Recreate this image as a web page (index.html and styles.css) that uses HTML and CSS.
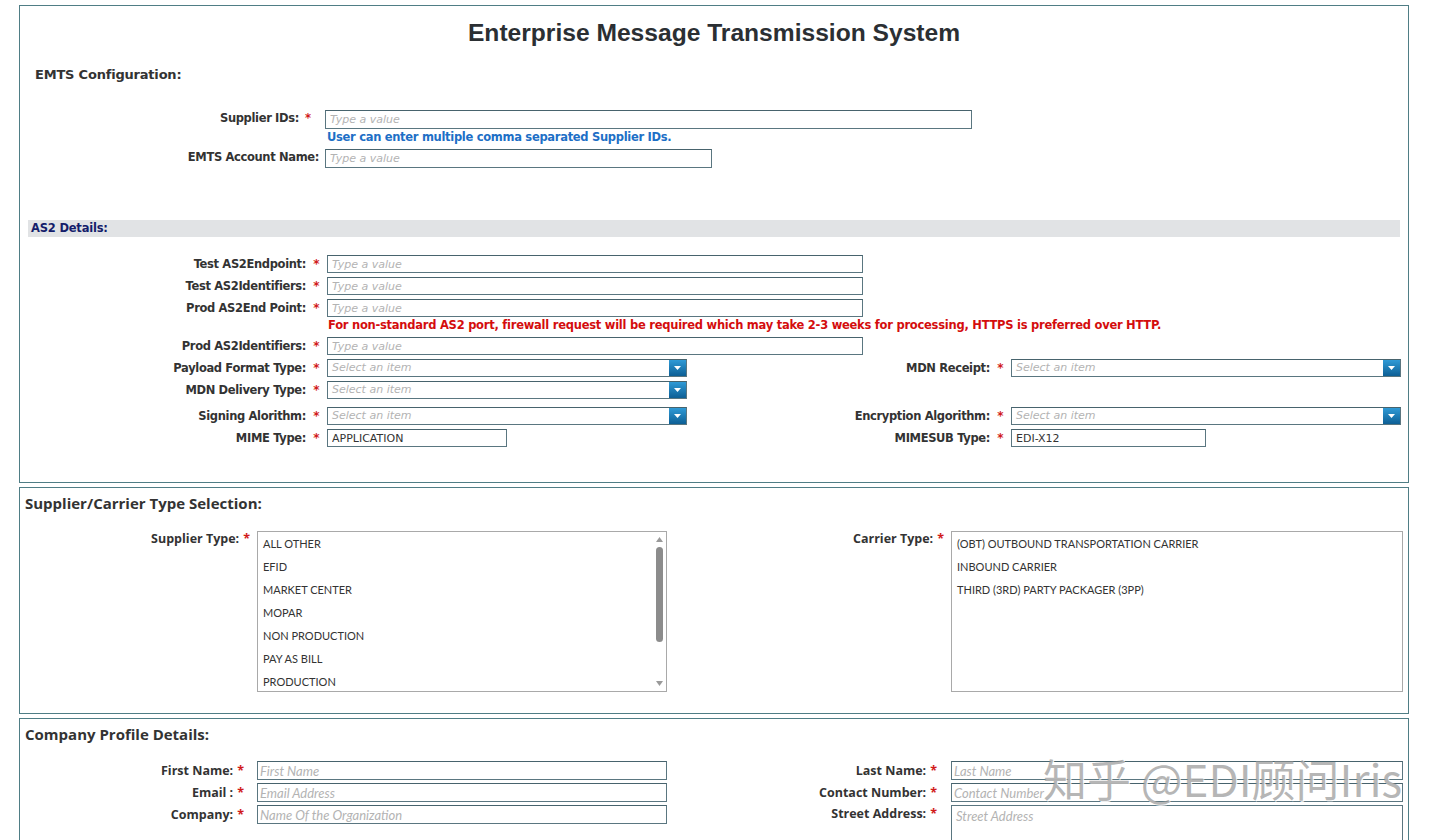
FILE: index.html
```html
<!DOCTYPE html>
<html>
<head>
<meta charset="utf-8">
<title>EMTS</title>
<link rel="stylesheet" href="styles.css">
</head>
<body>
<div class="page">
  <section class="box box-main">
    <h1 class="title">Enterprise Message Transmission System</h1>
    <h2 class="cfg-head">EMTS Configuration:</h2>
    <div class="cfg">
      <div class="row row-19">
        <label class="lbl lbl-cfg lbl-cfg-star">Supplier IDs:<span class="star">*</span></label>
        <input class="txt" style="width:647px" placeholder="Type a value">
      </div>
      <div class="hint hint-blue">User can enter multiple comma separated Supplier IDs.</div>
      <div class="row row-19 row-acct">
        <label class="lbl lbl-cfg">EMTS Account Name:</label>
        <input class="txt" style="width:387px" placeholder="Type a value">
      </div>
    </div>

    <div class="bar">AS2 Details:</div>

    <div class="as2">
      <div class="row">
        <div class="grp grp-left">
          <label class="lbl lbl-as2">Test AS2Endpoint:</label><span class="star-cell">*</span>
          <input class="txt" style="width:536px" placeholder="Type a value">
        </div>
      </div>
      <div class="row">
        <div class="grp grp-left">
          <label class="lbl lbl-as2">Test AS2Identifiers:</label><span class="star-cell">*</span>
          <input class="txt" style="width:536px" placeholder="Type a value">
        </div>
      </div>
      <div class="row">
        <div class="grp grp-left">
          <label class="lbl lbl-as2">Prod AS2End Point:</label><span class="star-cell">*</span>
          <input class="txt" style="width:536px" placeholder="Type a value">
        </div>
      </div>
      <div class="hint hint-red">For non-standard AS2 port, firewall request will be required which may take 2-3 weeks for processing, HTTPS is preferred over HTTP.</div>
      <div class="row row-after-hint">
        <div class="grp grp-left">
          <label class="lbl lbl-as2">Prod AS2Identifiers:</label><span class="star-cell">*</span>
          <input class="txt" style="width:536px" placeholder="Type a value">
        </div>
      </div>
      <div class="row">
        <div class="grp grp-left">
          <label class="lbl lbl-as2">Payload Format Type:</label><span class="star-cell">*</span>
          <div class="select" style="width:360px"><span class="ph">Select an item</span><span class="sel-btn"><svg width="7" height="4" viewBox="0 0 7 4"><path d="M0 0h7L3.5 4z" fill="#fff"/></svg></span></div>
        </div>
        <div class="grp grp-right">
          <label class="lbl lbl-as2r">MDN Receipt:</label><span class="star-cell">*</span>
          <div class="select" style="width:390px"><span class="ph">Select an item</span><span class="sel-btn"><svg width="7" height="4" viewBox="0 0 7 4"><path d="M0 0h7L3.5 4z" fill="#fff"/></svg></span></div>
        </div>
      </div>
      <div class="row">
        <div class="grp grp-left">
          <label class="lbl lbl-as2">MDN Delivery Type:</label><span class="star-cell">*</span>
          <div class="select" style="width:360px"><span class="ph">Select an item</span><span class="sel-btn"><svg width="7" height="4" viewBox="0 0 7 4"><path d="M0 0h7L3.5 4z" fill="#fff"/></svg></span></div>
        </div>
      </div>
      <div class="row row-gap8">
        <div class="grp grp-left">
          <label class="lbl lbl-as2">Signing Alorithm:</label><span class="star-cell">*</span>
          <div class="select" style="width:360px"><span class="ph">Select an item</span><span class="sel-btn"><svg width="7" height="4" viewBox="0 0 7 4"><path d="M0 0h7L3.5 4z" fill="#fff"/></svg></span></div>
        </div>
        <div class="grp grp-right">
          <label class="lbl lbl-as2r">Encryption Algorithm:</label><span class="star-cell">*</span>
          <div class="select" style="width:390px"><span class="ph">Select an item</span><span class="sel-btn"><svg width="7" height="4" viewBox="0 0 7 4"><path d="M0 0h7L3.5 4z" fill="#fff"/></svg></span></div>
        </div>
      </div>
      <div class="row">
        <div class="grp grp-left">
          <label class="lbl lbl-as2">MIME Type:</label><span class="star-cell">*</span>
          <input class="txt txt-val" style="width:180px" value="APPLICATION">
        </div>
        <div class="grp grp-right">
          <label class="lbl lbl-as2r">MIMESUB Type:</label><span class="star-cell">*</span>
          <input class="txt txt-val" style="width:195px" value="EDI-X12">
        </div>
      </div>
    </div>
  </section>

  <section class="box box-sel">
    <h2 class="sec-head">Supplier/Carrier Type Selection:</h2>
    <div class="sel-row">
      <div class="sgrp sgrp-left">
        <label class="slbl slbl-list">Supplier Type:<span class="star">*</span></label>
        <div class="listbox" style="width:410px">
          <ul class="items">
            <li>ALL OTHER</li>
            <li>EFID</li>
            <li>MARKET CENTER</li>
            <li>MOPAR</li>
            <li>NON PRODUCTION</li>
            <li>PAY AS BILL</li>
            <li>PRODUCTION</li>
          </ul>
          <div class="scrollbar">
            <svg class="sb-arrow" width="7" height="5" viewBox="0 0 7 5"><path d="M0 5L3.5 0L7 5z" fill="#9a9a9a"/></svg>
            <div class="sb-thumb"></div>
            <div class="sb-space"></div>
            <svg class="sb-arrow" width="7" height="5" viewBox="0 0 7 5"><path d="M0 0h7L3.5 5z" fill="#9a9a9a"/></svg>
          </div>
        </div>
      </div>
      <div class="sgrp sgrp-right">
        <label class="slbl slbl-list">Carrier Type:<span class="star">*</span></label>
        <div class="listbox" style="width:452px">
          <ul class="items">
            <li>(OBT) OUTBOUND TRANSPORTATION CARRIER</li>
            <li>INBOUND CARRIER</li>
            <li>THIRD (3RD) PARTY PACKAGER (3PP)</li>
          </ul>
        </div>
      </div>
    </div>
  </section>

  <section class="box box-profile">
    <h2 class="sec-head">Company Profile Details:</h2>
    <div class="prof-rows">
      <div class="prow">
        <div class="sgrp sgrp-left">
          <label class="slbl">First Name:<span class="star">*</span></label>
          <input class="txt txt-b" style="width:410px" placeholder="First Name">
        </div>
        <div class="sgrp sgrp-right">
          <label class="slbl">Last Name:<span class="star">*</span></label>
          <input class="txt txt-b" style="width:452px" placeholder="Last Name">
        </div>
      </div>
      <div class="prow">
        <div class="sgrp sgrp-left">
          <label class="slbl">Email :<span class="star">*</span></label>
          <input class="txt txt-b" style="width:410px" placeholder="Email Address">
        </div>
        <div class="sgrp sgrp-right">
          <label class="slbl">Contact Number:<span class="star">*</span></label>
          <input class="txt txt-b" style="width:452px" placeholder="Contact Number">
        </div>
      </div>
      <div class="prow">
        <div class="sgrp sgrp-left">
          <label class="slbl">Company:<span class="star">*</span></label>
          <input class="txt txt-b" style="width:410px" placeholder="Name Of the Organization">
        </div>
        <div class="sgrp sgrp-right sgrp-top">
          <label class="slbl">Street Address:<span class="star">*</span></label>
          <textarea class="area" style="width:452px" placeholder="Street Address"></textarea>
        </div>
      </div>
    </div>
  </section>
</div>
<div class="watermark">知乎 @EDI顾问Iris</div>
</body>
</html>
```

FILE: styles.css
```css
html, body {
  margin: 0;
  padding: 0;
  background: #ffffff;
  overflow: hidden;
}
body {
  font-family: "DejaVu Sans", Verdana, sans-serif;
  color: #333333;
  width: 1440px;
  height: 840px;
  position: relative;
}
.page {
  padding: 5px 0 0 19px;
  width: 1390px;
}
.box {
  border: 1px solid #4f7d85;
  box-sizing: border-box;
  width: 1390px;
  background: #fff;
}
.box + .box {
  margin-top: 4px;
}
.box-main {
  padding: 13px 0 35px 0;
}
.title {
  margin: 0;
  font-family: "Liberation Sans", Arial, sans-serif;
  font-weight: bold;
  font-size: 24.6px;
  line-height: 28px;
  text-align: center;
  color: #2b2f33;
}
.cfg-head {
  margin: 19px 0 0 15px;
  font-size: 13px;
  line-height: 18px;
  font-weight: bold;
  color: #333;
  letter-spacing: -0.2px;
}
.cfg {
  margin-top: 26px;
}
.row {
  display: flex;
  align-items: center;
  height: 18px;
  margin-top: 4px;
}
.row-19 {
  height: 19px;
  margin-top: 0;
}
.row-acct {
  margin-top: 5px;
}
.lbl {
  font-weight: bold;
  font-size: 11.5px;
  letter-spacing: -0.35px;
  text-align: right;
  white-space: nowrap;
  box-sizing: border-box;
  color: #333;
  flex: none;
}
.lbl-cfg {
  width: 305px;
  padding-right: 6px;
  padding-bottom: 3px;
}
.lbl-cfg-star {
  padding-right: 14px;
}
.star {
  color: #d11a1a;
  margin-left: 6px;
  letter-spacing: 0;
}
.star-cell {
  width: 21px;
  text-align: center;
  color: #d11a1a;
  font-weight: bold;
  font-size: 12px;
  flex: none;
}
.txt {
  box-sizing: border-box;
  height: 18px;
  border: 1px solid #5a7680;
  border-top-color: #47636d;
  padding: 0 4px;
  margin: 0;
  font-family: "DejaVu Sans", Verdana, sans-serif;
  font-size: 11px;
  color: #333;
  background: #fff;
  outline: none;
  flex: none;
}
.row-19 .txt {
  height: 19px;
}
.txt::placeholder {
  color: #b3b3b3;
  font-style: italic;
}
.txt-val {
  font-size: 11px;
  color: #333;
}
.hint {
  font-weight: bold;
  font-size: 11.5px;
  letter-spacing: -0.3px;
  line-height: 14px;
  height: 14px;
  white-space: nowrap;
}
.hint-blue {
  color: #1d6fc6;
  padding-left: 307px;
  padding-top: 1px;
}
.hint-red {
  color: #d40d0d;
  padding-left: 308px;
  margin-top: 1px;
  letter-spacing: -0.25px;
}
.row-after-hint {
  margin-top: 5px;
}
.row-gap8 {
  margin-top: 8px;
}
.bar {
  margin: 52px 8px 0 8px;
  height: 17px;
  line-height: 17px;
  background: #e1e3e5;
  padding-left: 3px;
  font-weight: bold;
  font-size: 11.5px;
  letter-spacing: -0.2px;
  color: #141d6b;
}
.as2 {
  padding-top: 14px;
}
.grp {
  display: flex;
  align-items: center;
  height: 100%;
}
.grp-left {
  width: 680px;
  flex: none;
}
.lbl-as2 {
  width: 286px;
}
.lbl-as2r {
  width: 290px;
}
.select {
  box-sizing: border-box;
  height: 18px;
  border: 1px solid #5a7680;
  border-top-color: #47636d;
  display: flex;
  align-items: stretch;
  flex: none;
}
.select .ph {
  flex: 1;
  padding-left: 4px;
  font-size: 11px;
  line-height: 16px;
  color: #b3b3b3;
  font-style: italic;
}
.sel-btn {
  width: 17px;
  background: linear-gradient(#2f9ad6, #0d5f95);
  display: flex;
  align-items: center;
  justify-content: center;
}

/* lower sections */
.box-sel, .box-profile {
  font-family: "Lato", "Open Sans", sans-serif;
}
.sec-head {
  margin: 0;
  padding: 5px 0 0 5px;
  font-family: "Open Sans", sans-serif;
  font-size: 15px;
  line-height: 20px;
  font-weight: bold;
  color: #333;
}
.box-sel {
  padding-bottom: 21px;
}
.sel-row {
  display: flex;
  margin-top: 18px;
}
.sgrp {
  display: flex;
  align-items: center;
}
.sgrp-left {
  width: 647px;
  flex: none;
}
.sel-row .sgrp {
  align-items: flex-start;
}
.slbl {
  box-sizing: border-box;
  text-align: right;
  font-family: "Open Sans", sans-serif;
  font-weight: bold;
  font-size: 12.5px;
  white-space: nowrap;
  color: #333;
  flex: none;
}
.sgrp-left .slbl {
  width: 237px;
  padding-right: 13px;
}
.sgrp-right .slbl {
  width: 284px;
  padding-right: 14px;
}
.slbl .star {
  margin-left: 4px;
}
.sel-row .slbl {
  line-height: 15px;
}
.sgrp-left .slbl-list {
  padding-right: 7px;
}
.sgrp-right .slbl-list {
  padding-right: 7px;
}
.listbox {
  box-sizing: border-box;
  height: 161px;
  border: 1px solid #a9a9a9;
  display: flex;
  flex: none;
}
.items {
  list-style: none;
  margin: 0;
  padding: 0 0 0 5px;
  flex: 1;
}
.items li {
  height: 23px;
  line-height: 23px;
  font-size: 11px;
  color: #333;
  white-space: nowrap;
}
.scrollbar {
  width: 14px;
  display: flex;
  flex-direction: column;
  align-items: center;
  padding: 5px 0 5px 0;
  box-sizing: border-box;
}
.sb-arrow {
  flex: none;
}
.sb-thumb {
  width: 7px;
  height: 95px;
  margin-top: 5px;
  border-radius: 4px;
  background: #8c8c8c;
}
.sb-space {
  flex: 1;
}
.box-profile {
  padding-bottom: 40px;
}
.prof-rows {
  margin-top: 17px;
}
.prow {
  display: flex;
  height: 19px;
  margin-top: 3px;
}
.prow:first-child {
  margin-top: 0;
}
.txt-b {
  height: 19px;
  padding: 0 2px;
  font-family: "Lato", "Open Sans", sans-serif;
  font-size: 13px;
}
.sgrp-top {
  align-items: flex-start;
}
.area {
  box-sizing: border-box;
  height: 70px;
  border: 1px solid #5a7680;
  padding: 2px 4px;
  margin: 0;
  resize: none;
  font-family: "Lato", "Open Sans", sans-serif;
  font-size: 13px;
  outline: none;
}
.area::placeholder {
  color: #b3b3b3;
  font-style: italic;
}
.watermark {
  position: absolute;
  left: 1043px;
  top: 751px;
  font-family: "Noto Sans CJK SC", "Noto Sans", sans-serif;
  font-size: 44px;
  line-height: 54px;
  font-weight: 400;
  color: rgba(150, 150, 150, 0.7);
  text-shadow: 1px 1px 0 rgba(255, 255, 255, 0.9);
  white-space: nowrap;
  pointer-events: none;
}
```
